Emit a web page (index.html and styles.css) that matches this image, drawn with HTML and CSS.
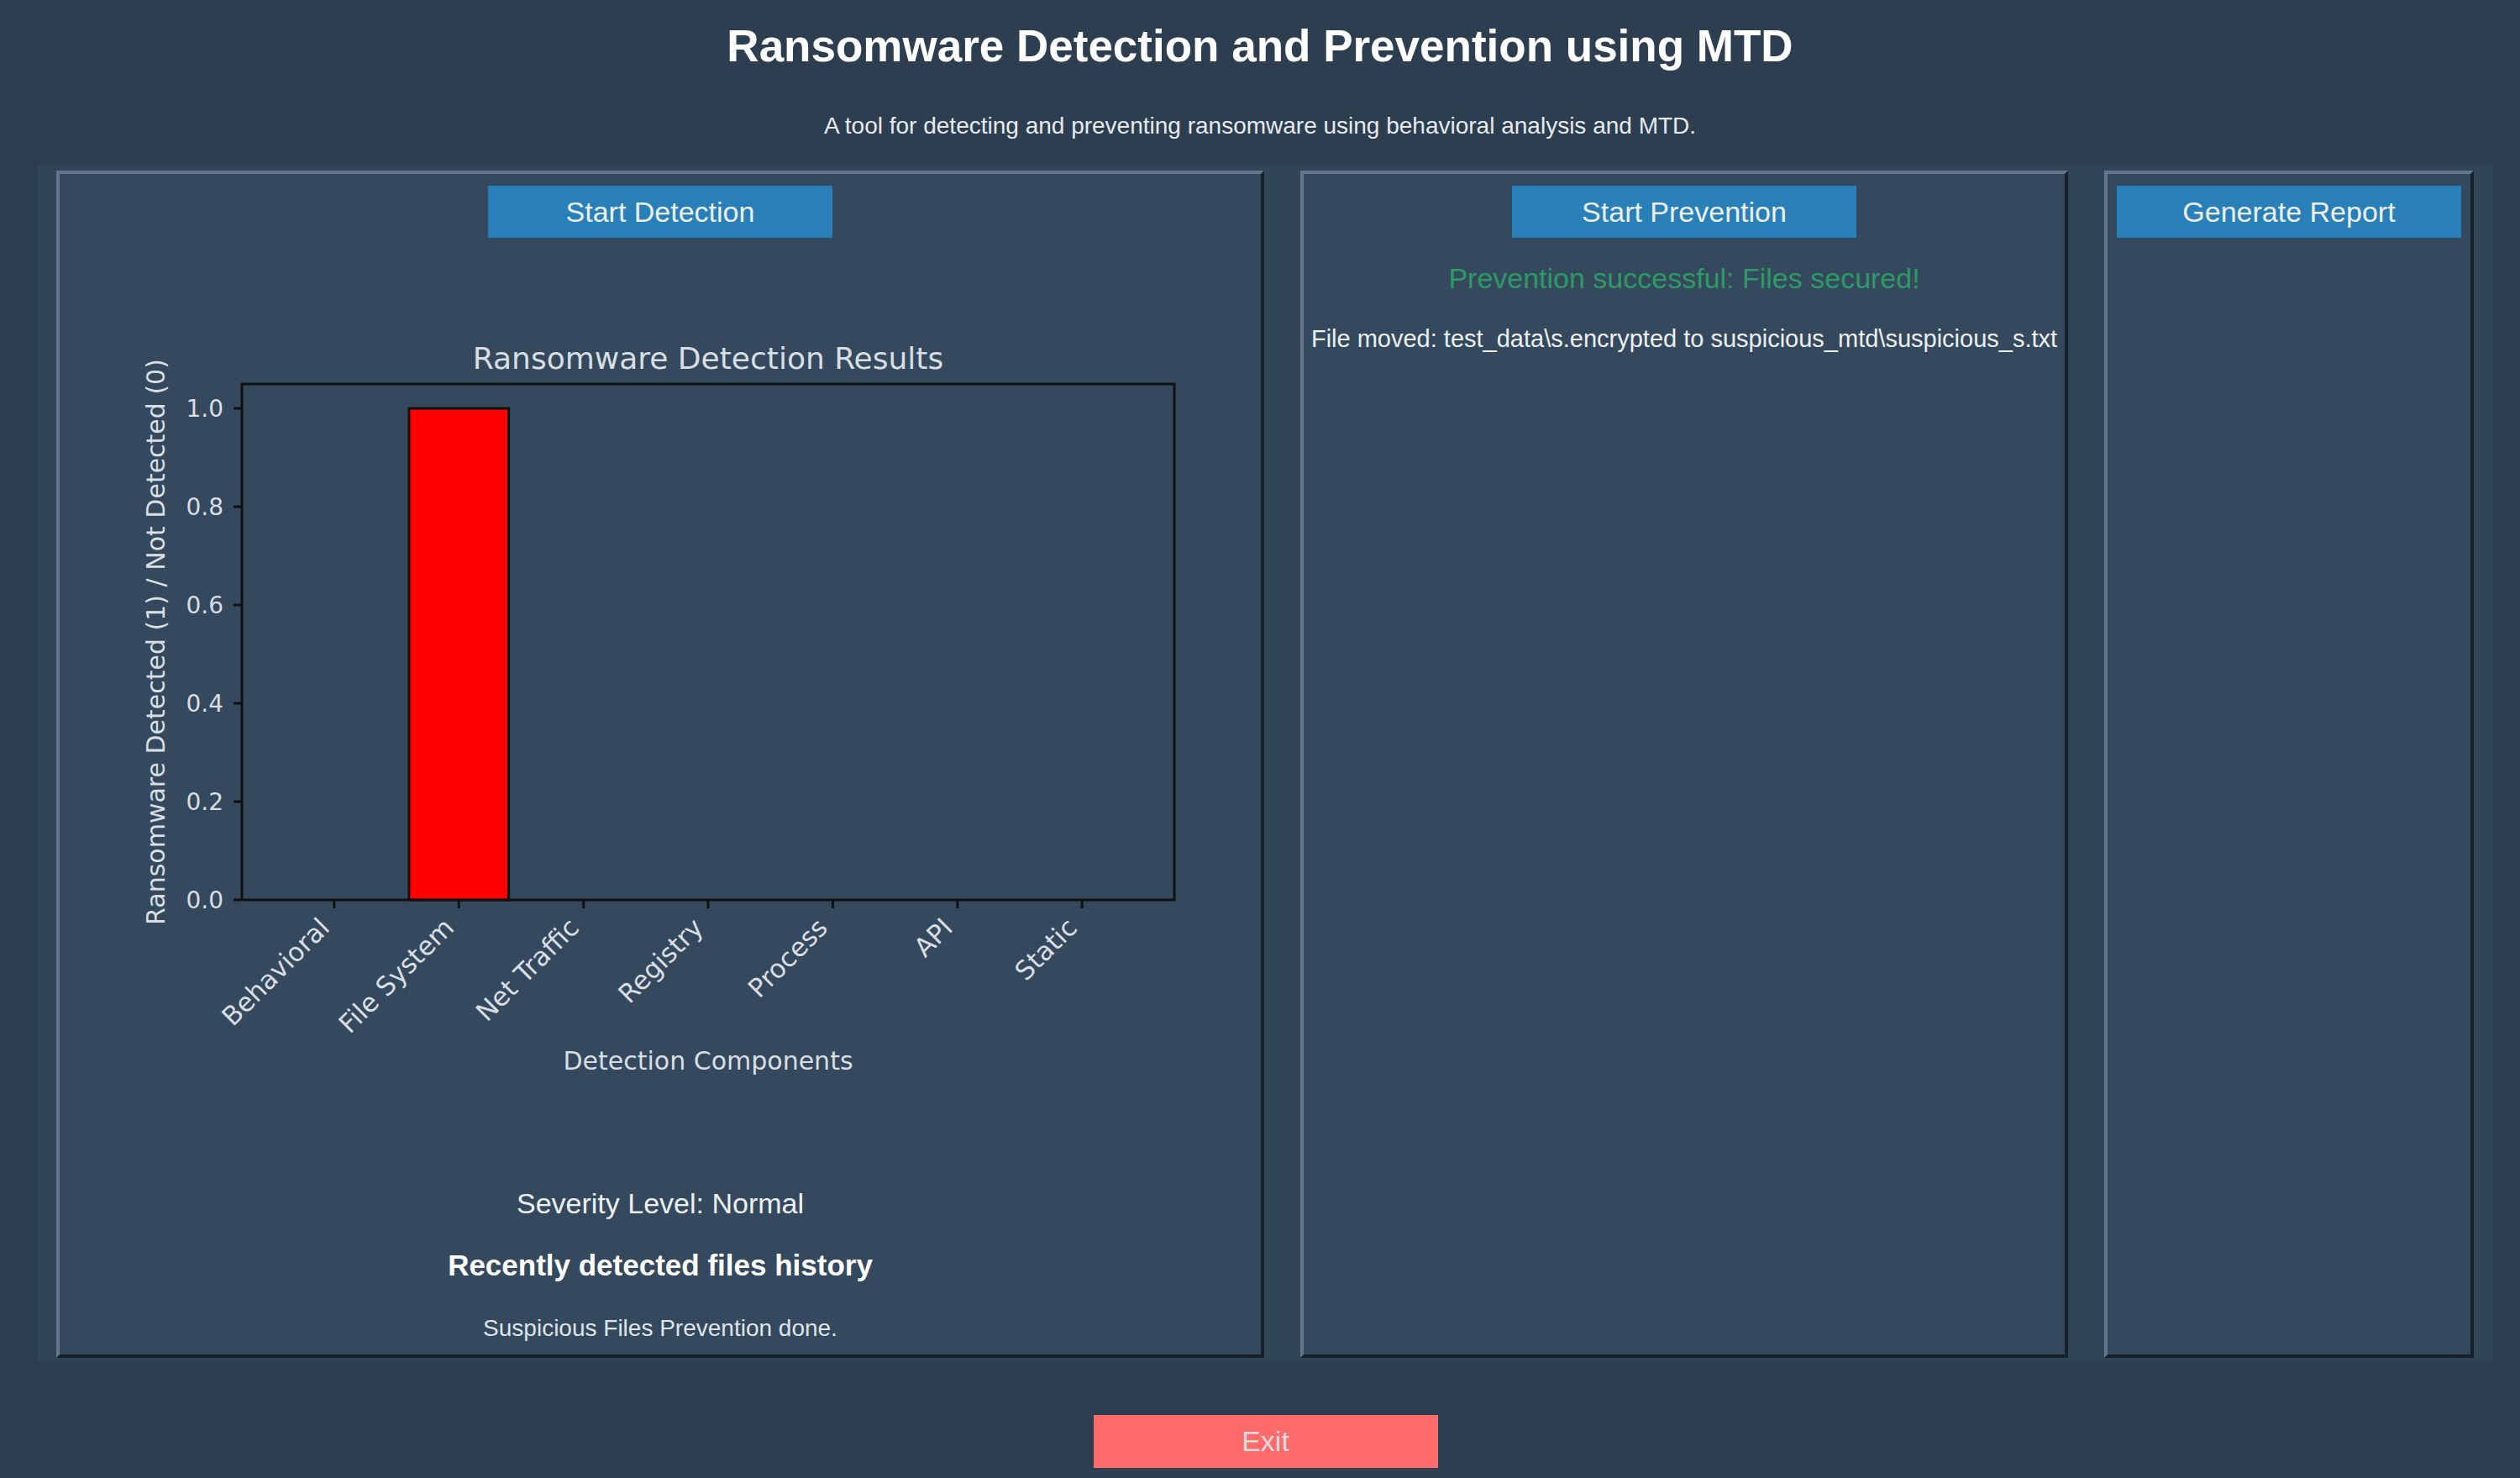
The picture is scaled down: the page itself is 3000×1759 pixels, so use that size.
FILE: index.html
```html
<!DOCTYPE html>
<html>
<head>
    <title>Ransomware Detection and Prevention using MTD</title>
    <link rel="stylesheet" href="styles.css">
</head>
<body>
    <div class="header">
        <h1 class="title">Ransomware Detection and Prevention using MTD</h1>
        <p class="subtitle">A tool for detecting and preventing ransomware using behavioral analysis and MTD.</p>
    </div>

    <div class="frame">
        <!-- Detection panel -->
        <section class="panel panel-detect">
            <button class="btn" type="button">Start Detection</button>

            <svg class="chart" width="1300" height="900" viewBox="0 0 1300 900">
                <text class="chart-title" x="707" y="49" text-anchor="middle">Ransomware Detection Results</text>

                <!-- bars (only File System detected) -->
                <rect x="350.9" y="96" width="118.7" height="585" fill="#ff0000" stroke="#111" stroke-width="3"/>

                <!-- axes box -->
                <rect x="152" y="67" width="1110" height="614" fill="none" stroke="#111" stroke-width="3"/>

                <!-- y ticks -->
                <g class="tick-line">
                    <line x1="142" y1="681" x2="152" y2="681"/>
                    <line x1="142" y1="564" x2="152" y2="564"/>
                    <line x1="142" y1="447" x2="152" y2="447"/>
                    <line x1="142" y1="330" x2="152" y2="330"/>
                    <line x1="142" y1="213" x2="152" y2="213"/>
                    <line x1="142" y1="96" x2="152" y2="96"/>
                </g>
                <g class="tick-label" text-anchor="end">
                    <text x="130" y="691">0.0</text>
                    <text x="130" y="574">0.2</text>
                    <text x="130" y="457">0.4</text>
                    <text x="130" y="340">0.6</text>
                    <text x="130" y="223">0.8</text>
                    <text x="130" y="106">1.0</text>
                </g>

                <!-- x ticks -->
                <g class="tick-line">
                    <line x1="261.8" y1="681" x2="261.8" y2="691"/>
                    <line x1="410.2" y1="681" x2="410.2" y2="691"/>
                    <line x1="558.6" y1="681" x2="558.6" y2="691"/>
                    <line x1="707" y1="681" x2="707" y2="691"/>
                    <line x1="855.4" y1="681" x2="855.4" y2="691"/>
                    <line x1="1003.8" y1="681" x2="1003.8" y2="691"/>
                    <line x1="1152.2" y1="681" x2="1152.2" y2="691"/>
                </g>
                <g class="tick-label x-label" text-anchor="end">
                    <text x="258" y="716" transform="rotate(-45 258 716)">Behavioral</text>
                    <text x="406" y="716" transform="rotate(-45 406 716)">File System</text>
                    <text x="555" y="716" transform="rotate(-45 555 716)">Net Traffic</text>
                    <text x="703" y="716" transform="rotate(-45 703 716)">Registry</text>
                    <text x="851" y="716" transform="rotate(-45 851 716)">Process</text>
                    <text x="1000" y="716" transform="rotate(-45 1000 716)">API</text>
                    <text x="1148" y="716" transform="rotate(-45 1148 716)">Static</text>
                </g>

                <text class="axis-label" x="707" y="883" text-anchor="middle">Detection Components</text>
                <text class="axis-label" x="60" y="374" text-anchor="middle" transform="rotate(-90 60 374)">Ransomware Detected (1) / Not Detected (0)</text>
            </svg>

            <p class="severity">Severity Level: Normal</p>
            <p class="history-title">Recently detected files history</p>
            <p class="history-text">Suspicious Files Prevention done.</p>
        </section>

        <!-- Prevention panel -->
        <section class="panel panel-prevent">
            <button class="btn" type="button">Start Prevention</button>
            <p class="status-ok">Prevention successful: Files secured!</p>
            <p class="log">File moved: test_data\s.encrypted to suspicious_mtd\suspicious_s.txt</p>
        </section>

        <!-- Report panel -->
        <section class="panel panel-report">
            <button class="btn" type="button">Generate Report</button>
        </section>
    </div>

    <div class="footer">
        <button class="btn btn-exit" type="button">Exit</button>
    </div>
</body>
</html>
```

FILE: styles.css
```css
body { margin: 0; background: #2c3e50; font-family: "Liberation Sans", Arial, sans-serif; color: #ecf0f1; }

.header { text-align: center; padding-top: 25px; }
.title { margin: 0; font-size: 53px; line-height: 60px; font-weight: bold; color: #ffffff; }
.subtitle { margin: 48px 0 0; font-size: 28px; line-height: 34px; color: #e6eaee; }

.frame { display: flex; gap: 43px; margin: 30px 32px 0 45px; padding: 6px 23px 4px 22px; background: #314558; }
.panel { box-sizing: border-box; height: 1413px; background: #34495e; border: 4px solid; border-color: #62758b #15202b #15202b #62758b; display: flex; flex-direction: column; align-items: center; padding-top: 14px; }
.panel-detect { width: 1438px; }
.panel-prevent { width: 914px; }
.panel-report { width: 440px; }

.btn { width: 410px; height: 62px; padding: 0; border: 0; background: #2980b9; color: #ecf0f1; font-family: "Liberation Sans", Arial, sans-serif; font-size: 34px; cursor: pointer; }
.btn-exit { height: 63px; background: #ff6b6b; color: #dcdcdc; }

.chart { display: block; margin-top: 107px; font-family: "DejaVu Sans", sans-serif; }
.chart-title { font-size: 36px; fill: #d9dee3; }
.tick-line line { stroke: #111; stroke-width: 3; }
.tick-label text { font-size: 28px; fill: #d9dee3; }
.tick-label.x-label text { font-size: 31px; }
.axis-label { font-size: 30px; fill: #d9dee3; }

.severity { margin: 122px 0 0; font-size: 34px; line-height: 40px; }
.history-title { margin: 34px 0 0; font-size: 35px; line-height: 40px; font-weight: bold; color: #ffffff; }
.history-text { margin: 37px 0 0; font-size: 28px; line-height: 36px; color: #dfe4ea; }

.status-ok { margin: 28px 0 0; font-size: 34px; line-height: 40px; color: #2e9a63; }
.log { margin: 34px 0 0; font-size: 29px; line-height: 36px; white-space: nowrap; }

.footer { display: flex; justify-content: center; margin: 64px 32px 0 45px; }
```
